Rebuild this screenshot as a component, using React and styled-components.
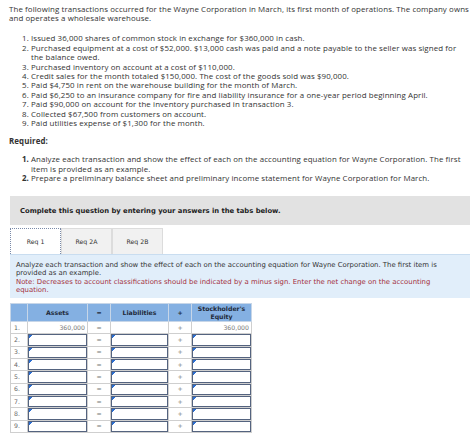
import React from "react";
import styled, { createGlobalStyle } from "styled-components";

const Global = createGlobalStyle`
  html, body { margin: 0; padding: 0; background: #fff; }
  body { font-family: "Open Sans", Lato, Arial, sans-serif; color: #333; }
`;

const Page = styled.div`
  width: 474px;
  padding: 5px 2px 0 9px;
  box-sizing: border-box;
`;

const textStyle = `
  font-size: 7.9px;
  letter-spacing: 0.1px;
  line-height: 9.4px;
  color: #333;
`;

const Para = styled.p`
  margin: 0;
  ${textStyle}
`;

const List = styled.ol`
  margin: 10.5px 0 0 0;
  padding-left: 22px;
  ${textStyle}
`;

const Heading = styled.div`
  margin-top: 9px;
  ${textStyle}
  font-weight: 700;
`;

const ReqList = styled(List)`
  margin-top: 8.5px;
  li::marker { font-weight: 700; }
`;

const Instruct = styled.div`
  margin: 12.5px 2px 0 1px;
  background: #e2e2e2;
  height: 29px;
  display: flex;
  align-items: center;
  padding-left: 10px;
  font-family: "DejaVu Sans", Verdana, sans-serif;
  font-weight: 700;
  font-size: 6.8px;
  color: #222;
`;

const Tabs = styled.div`
  display: flex;
  margin: 3px 0 0 1px;
`;

const Tab = styled.div`
  width: 51px;
  height: 26px;
  box-sizing: border-box;
  display: flex;
  align-items: center;
  justify-content: center;
  font-family: "DejaVu Sans", Verdana, sans-serif;
  font-size: 6.2px;
  color: #333;
  background: ${(p) => (p.$active ? "#fff" : "#f1f1f1")};
  border: ${(p) => (p.$active ? "1px dotted #7a8aa8" : "1px solid #dcdcdc")};
  border-bottom: none;
`;

const Panel = styled.div`
  margin: 0 2px 0 1px;
  background: #e1eefa;
  border-top: 1px solid #c9ddf0;
  padding: 6px 6px 4px 6px;
  font-family: "DejaVu Sans", Verdana, sans-serif;
  font-size: 6.9px;
  line-height: 8.3px;
  color: #333;
`;

const Note = styled.div`
  color: #a3303c;
`;

const Table = styled.table`
  margin: 5px 0 0 1px;
  border-collapse: collapse;
  font-family: "DejaVu Sans", Verdana, sans-serif;
  font-size: 6.2px;
  table-layout: fixed;
`;

const Th = styled.th`
  background: #84b0e2;
  border: 1px solid #c7d6e8;
  height: 17px;
  padding: 0;
  width: ${(p) => p.$w}px;
  font-weight: 700;
  color: #1f2a3a;
  line-height: 7.5px;
  text-align: center;
`;

const Td = styled.td`
  border: 1px solid #cfcfcf;
  height: 11.3px;
  padding: 0;
  color: #777;
  text-align: ${(p) => p.$align || "center"};
  font-size: 6.2px;
  line-height: 10px;
`;

const NumCell = styled(Td)`
  text-align: left;
  padding-left: 3px;
  color: #666;
`;

const Value = styled.span`
  display: block;
  padding-right: 2px;
  color: #777;
`;

const Input = styled.input`
  display: block;
  width: 100%;
  height: 11.3px;
  box-sizing: border-box;
  margin: 0;
  padding: 0;
  border: 1px solid #54637f;
  background: linear-gradient(135deg, #2c6ed0 0, #2c6ed0 2.5px, transparent 2.6px) #fff;
  outline: none;
`;

const items = [
  "Issued 36,000 shares of common stock in exchange for $360,000 in cash.",
  <>
    Purchased equipment at a cost of $52,000. $13,000 cash was paid and a note payable to the seller was signed for
    <br />
    the balance owed.
  </>,
  "Purchased inventory on account at a cost of $110,000.",
  "Credit sales for the month totaled $150,000. The cost of the goods sold was $90,000.",
  "Paid $4,750 in rent on the warehouse building for the month of March.",
  "Paid $6,250 to an insurance company for fire and liability insurance for a one-year period beginning April.",
  "Paid $90,000 on account for the inventory purchased in transaction 3.",
  "Collected $67,500 from customers on account.",
  "Paid utilities expense of $1,300 for the month.",
];

export default function App() {
  const rows = [2, 3, 4, 5, 6, 7, 8, 9];
  return (
    <Page>
      <Global />
      <Para>
        The following transactions occurred for the Wayne Corporation in March, its first month of operations. The company owns
        <br />
        and operates a wholesale warehouse.
      </Para>
      <List>
        {items.map((t, i) => (
          <li key={i}>{t}</li>
        ))}
      </List>
      <Heading>Required:</Heading>
      <ReqList>
        <li>
          Analyze each transaction and show the effect of each on the accounting equation for Wayne Corporation. The first
          <br />
          item is provided as an example.
        </li>
        <li>Prepare a preliminary balance sheet and preliminary income statement for Wayne Corporation for March.</li>
      </ReqList>
      <Instruct>Complete this question by entering your answers in the tabs below.</Instruct>
      <Tabs>
        <Tab $active>Req 1</Tab>
        <Tab>Req 2A</Tab>
        <Tab>Req 2B</Tab>
      </Tabs>
      <Panel>
        Analyze each transaction and show the effect of each on the accounting equation for Wayne Corporation. The first item is provided as an example.
        <Note>Note: Decreases to account classifications should be indicated by a minus sign. Enter the net change on the accounting equation.</Note>
      </Panel>
      <Table>
        <thead>
          <tr>
            <Th $w={16}></Th>
            <Th $w={59}>Assets</Th>
            <Th $w={22}>=</Th>
            <Th $w={57}>Liabilities</Th>
            <Th $w={22}>+</Th>
            <Th $w={59}>Stockholder's Equity</Th>
          </tr>
        </thead>
        <tbody>
          <tr>
            <NumCell>1.</NumCell>
            <Td $align="right"><Value>360,000</Value></Td>
            <Td>=</Td>
            <Td></Td>
            <Td>+</Td>
            <Td $align="right"><Value>360,000</Value></Td>
          </tr>
          {rows.map((n) => (
            <tr key={n}>
              <NumCell>{n}.</NumCell>
              <Td><Input /></Td>
              <Td>=</Td>
              <Td><Input /></Td>
              <Td>+</Td>
              <Td><Input /></Td>
            </tr>
          ))}
        </tbody>
      </Table>
    </Page>
  );
}
